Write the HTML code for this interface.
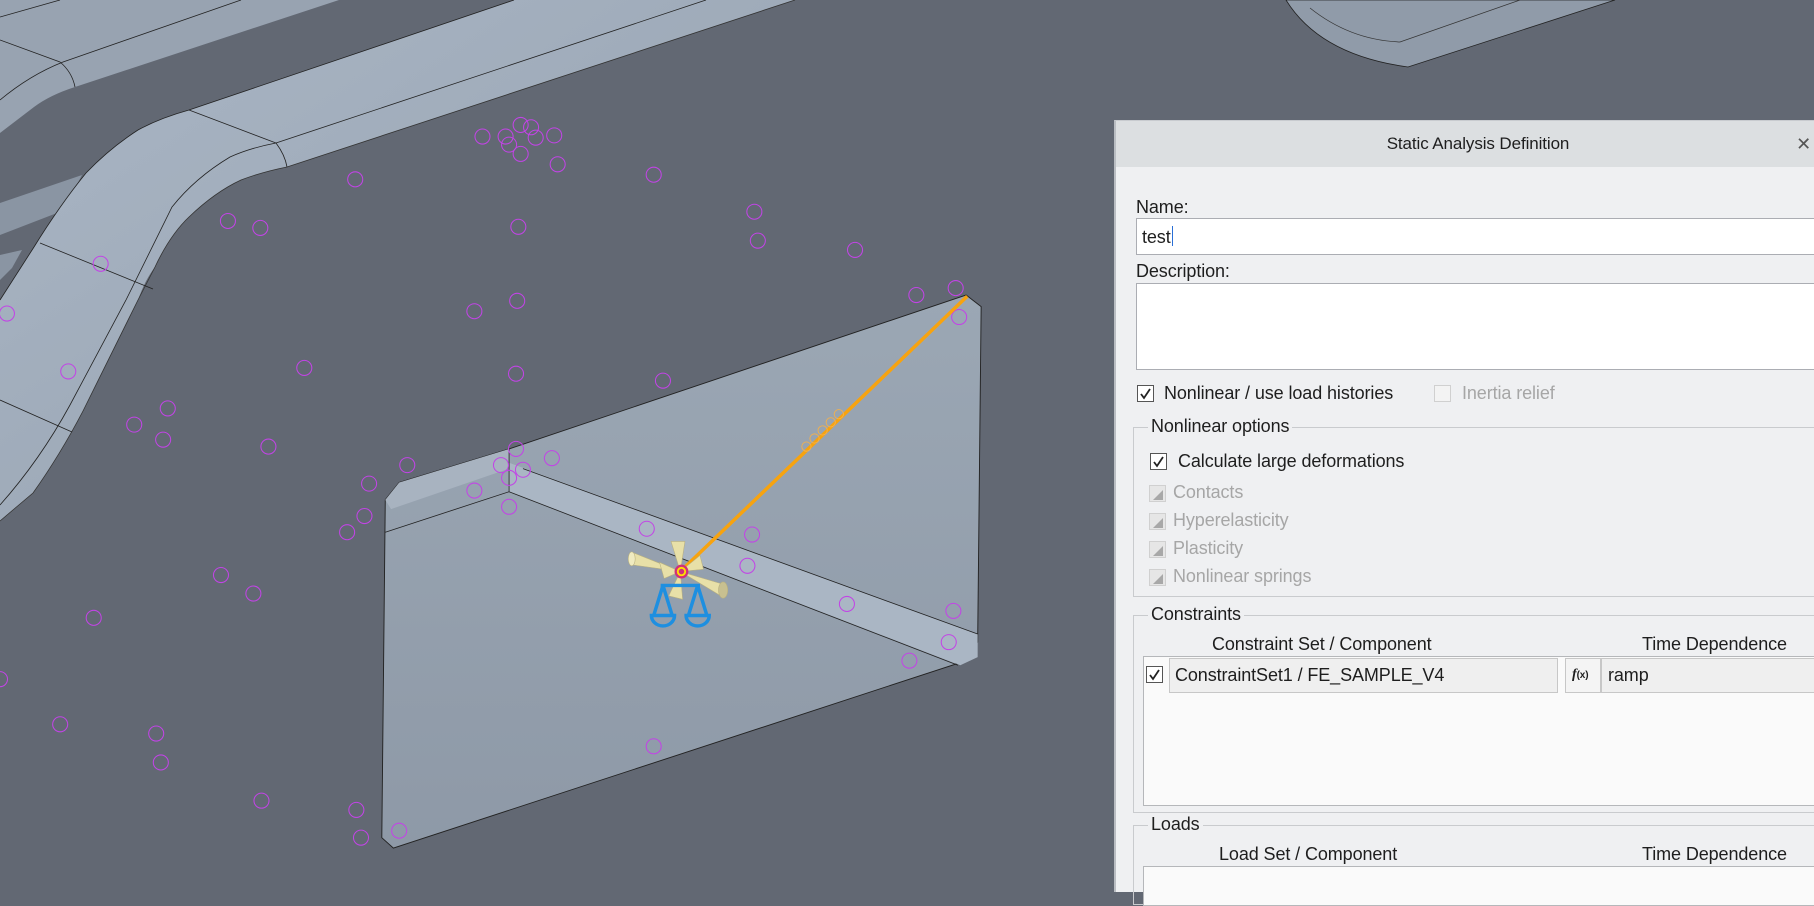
<!DOCTYPE html>
<html><head><meta charset="utf-8">
<style>
*{margin:0;padding:0;box-sizing:border-box}
html,body{width:1814px;height:892px;overflow:hidden;background:#626873;font-family:"Liberation Sans",sans-serif;}
#scene{position:absolute;left:0;top:0}
#dlg{position:absolute;left:1114px;top:120px;width:700px;height:772px;background:#eff0f2;border-left:2px solid #b9bdc2;border-top:1px solid #c8cbcf;color:#1e1e1e;font-size:18px;letter-spacing:-0.1px}
.title{position:absolute;left:0;top:0;width:700px;height:46px;background:#dcdfe1;text-align:center;line-height:46px;font-size:17px;padding-left:24px}
.close{position:absolute;right:0;top:0;line-height:46px;font-size:18px;color:#555}
.abs{position:absolute;white-space:nowrap}
.inp{position:absolute;background:#fff;border:1px solid #abadb3}
.cb{position:absolute;width:17px;height:17px;border:1px solid #555;background:#fff}
.cb svg{position:absolute;left:1px;top:1px}
.dcb{position:absolute;width:17px;height:17px;border:1px solid #d0d0d0;background:#e6e6e6}
.dis{color:#a6a6a6}
.grp{position:absolute;border:1px solid #c9cbce;border-right:none}
.lg{position:absolute;background:#eff0f2;padding:0 3px}
.tbl{position:absolute;background:#fafafa;border:1px solid #b5b7ba;border-right:none}
.cell{position:absolute;background:#efefef;border:1px solid #c7c7c7}
</style></head><body>
<svg id="scene" width="1814" height="892" viewBox="0 0 1814 892">
<defs>
<linearGradient id="gb" x1="0" y1="0" x2="1" y2="1"><stop offset="0" stop-color="#aab6c5"/><stop offset="1" stop-color="#94a0ae"/></linearGradient>
<linearGradient id="gp" x1="0" y1="0" x2="0" y2="1"><stop offset="0" stop-color="#9ba7b4"/><stop offset="1" stop-color="#8e99a7"/></linearGradient>
</defs>
<rect width="1814" height="892" fill="#626873"/>
<!-- top bar -->
<path d="M0,0 L339,0 L75,87 Q50,95 34,107 L0,133 Z" fill="#98a3b1"/>
<line x1="0" y1="17" x2="60" y2="0" stroke="#222" stroke-width="0.8"/>
<path d="M241,0 L63,62 Q30,75 0,100" fill="none" stroke="#222" stroke-width="0.8"/>
<path d="M0,40 L60,62 Q72,72 75,87" fill="none" stroke="#222" stroke-width="0.8"/>
<!-- secondary bar in gap -->
<polygon points="0,203 82,175 70,198 57,213 0,235" fill="#8a95a3"/>
<polygon points="0,255 22,250 12,268 0,280" fill="#8a95a3"/>
<!-- middle bent bar -->
<path d="M514,0 L189,110 Q160,118 138,130 Q110,148 86,173 Q60,205 34,247 L0,300 L0,521 Q20,505 33,493 Q60,455 83,411 L138,300 Q145,280 155,267 Q170,235 189,217 Q215,192 241,180 Q262,172 287,167 L795,0 Z" fill="url(#gb)"/>
<path d="M706,0 L276,143 Q250,148 230,157 Q195,178 172,207 L126,300 L70,405 Q40,460 0,505" fill="none" stroke="#222" stroke-width="0.8"/>
<path d="M514,0 L189,110 Q160,118 138,130 Q110,148 86,173 Q60,205 34,247 L0,300" fill="none" stroke="#222" stroke-width="0.8"/>
<path d="M795,0 L287,167 Q262,172 241,180 Q215,192 189,217 Q170,235 155,267 L138,300 L83,411 Q60,455 33,493 L0,521" fill="none" stroke="#333" stroke-width="0.8"/>
<line x1="189" y1="110" x2="276" y2="143" stroke="#222" stroke-width="0.8"/>
<path d="M276,143 Q285,155 287,167" fill="none" stroke="#222" stroke-width="0.8"/>
<line x1="40" y1="243" x2="153" y2="289" stroke="#222" stroke-width="0.8"/>
<line x1="0" y1="400" x2="72" y2="432" stroke="#222" stroke-width="0.8"/>
<!-- top-right part -->
<path d="M1286,0 Q1320,55 1408,67 L1615,0 Z" fill="#909ba9" stroke="#222" stroke-width="0.8"/>
<path d="M1310,8 Q1350,40 1400,42 L1520,0" fill="none" stroke="#333" stroke-width="0.7"/>
<g transform="scale(1.157)">
<!-- panel -->
<polygon points="345,417 440,388 835,255 848,265 845,555 832,572 340,733 330,724 333,432" fill="url(#gp)" stroke="#222" stroke-width="0.8"/>
<polygon points="345,417 440,388 440,405 338,440 333,432" fill="#a8b3c0"/>
<!-- tube -->
<polygon points="440,400 845,548 845,568 830,575 440,425" fill="#aab6c4"/>
<line x1="452" y1="405" x2="845" y2="548" stroke="#222" stroke-width="0.7"/>
<line x1="440" y1="425" x2="828" y2="575" stroke="#222" stroke-width="0.7"/>
<line x1="333" y1="460" x2="440" y2="425" stroke="#222" stroke-width="0.7"/>
<line x1="440" y1="388" x2="440" y2="425" stroke="#222" stroke-width="0.7"/>
<!-- circles -->
<g fill="none" stroke="#c244e6" stroke-width="0.9">
<circle cx="307" cy="155" r="6.5"/><circle cx="417" cy="118" r="6.5"/><circle cx="437" cy="118" r="6.5"/><circle cx="450" cy="108" r="6.5"/><circle cx="459" cy="110" r="6.5"/><circle cx="463" cy="119" r="6.5"/><circle cx="479" cy="117" r="6.5"/><circle cx="440" cy="125" r="6.5"/><circle cx="450" cy="133" r="6.5"/><circle cx="482" cy="142" r="6.5"/><circle cx="565" cy="151" r="6.5"/><circle cx="448" cy="196" r="6.5"/><circle cx="197" cy="191" r="6.5"/><circle cx="225" cy="197" r="6.5"/><circle cx="652" cy="183" r="6.5"/><circle cx="655" cy="208" r="6.5"/><circle cx="739" cy="216" r="6.5"/><circle cx="87" cy="228" r="6.5"/><circle cx="6" cy="271" r="6.5"/><circle cx="410" cy="269" r="6.5"/><circle cx="447" cy="260" r="6.5"/><circle cx="792" cy="255" r="6.5"/><circle cx="826" cy="249" r="6.5"/><circle cx="829" cy="274" r="6.5"/><circle cx="59" cy="321" r="6.5"/><circle cx="263" cy="318" r="6.5"/><circle cx="446" cy="323" r="6.5"/><circle cx="573" cy="329" r="6.5"/><circle cx="145" cy="353" r="6.5"/><circle cx="116" cy="367" r="6.5"/><circle cx="141" cy="380" r="6.5"/><circle cx="232" cy="386" r="6.5"/><circle cx="352" cy="402" r="6.5"/><circle cx="319" cy="418" r="6.5"/><circle cx="446" cy="388" r="6.5"/><circle cx="477" cy="396" r="6.5"/><circle cx="410" cy="424" r="6.5"/><circle cx="440" cy="438" r="6.5"/><circle cx="300" cy="460" r="6.5"/><circle cx="315" cy="446" r="6.5"/><circle cx="559" cy="457" r="6.5"/><circle cx="650" cy="462" r="6.5"/><circle cx="646" cy="489" r="6.5"/><circle cx="191" cy="497" r="6.5"/><circle cx="219" cy="513" r="6.5"/><circle cx="81" cy="534" r="6.5"/><circle cx="732" cy="522" r="6.5"/><circle cx="824" cy="528" r="6.5"/><circle cx="820" cy="555" r="6.5"/><circle cx="786" cy="571" r="6.5"/><circle cx="52" cy="626" r="6.5"/><circle cx="135" cy="634" r="6.5"/><circle cx="139" cy="659" r="6.5"/><circle cx="226" cy="692" r="6.5"/><circle cx="308" cy="700" r="6.5"/><circle cx="312" cy="724" r="6.5"/><circle cx="345" cy="718" r="6.5"/><circle cx="565" cy="645" r="6.5"/><circle cx="0" cy="587" r="6.5"/><circle cx="440" cy="413" r="6.5"/><circle cx="433" cy="402" r="6.5"/><circle cx="452" cy="406" r="6.5"/>
</g>
<!-- orange line + spring -->
<line x1="588" y1="494" x2="836" y2="256" stroke="#f7a30f" stroke-width="3"/>
<g fill="none" stroke="#f0b050" stroke-width="0.8"><circle cx="697" cy="386" r="4"/><circle cx="704" cy="379" r="4"/><circle cx="711" cy="372" r="4"/><circle cx="718" cy="365" r="4"/><circle cx="725" cy="358" r="4"/></g>
<!-- constraint cones -->
<g fill="#e8e0a8" stroke="#b8b080" stroke-width="0.5">
<polygon points="588,494 548,478 545,488"/><ellipse cx="546" cy="483" rx="3" ry="6" fill="#f0ebc0"/>
<polygon points="588,494 580,468 592,468"/>
<polygon points="588,494 625,505 623,515"/><ellipse cx="625" cy="510" rx="4" ry="7" fill="#c8c090"/>
<polygon points="588,494 578,515 590,518"/>
<polygon points="588,494 570,486 574,500"/>
<polygon points="588,494 605,480 608,492"/>
</g>
<circle cx="589" cy="494" r="6" fill="#d0307a"/><circle cx="589" cy="494" r="3.2" fill="none" stroke="#ffe000" stroke-width="1.6"/>
<!-- scales icon -->
<g fill="none" stroke="#1e8fe0" stroke-width="3">
<line x1="571" y1="506" x2="605" y2="506"/>
<path d="M573,506 L565,532 M573,506 L581,532 M603,506 L595,532 M603,506 L611,532"/>
<path d="M563,532 L583,532 A10,9 0 0 1 563,532 Z M593,532 L613,532 A10,9 0 0 1 593,532 Z"/>
</g>
</g>
</svg>

<div id="dlg">
<div class="title">Static Analysis Definition<span class="close">✕&nbsp;</span></div>
<div class="abs" style="left:20px;top:76px">Name:</div>
<div class="inp" style="left:20px;top:97px;width:690px;height:37px"><span class="abs" style="left:5px;top:8px">test</span><span class="abs" style="left:35px;top:7px;width:1px;height:20px;background:#2a6fd6"></span></div>
<div class="abs" style="left:20px;top:140px">Description:</div>
<div class="inp" style="left:20px;top:162px;width:690px;height:87px"></div>
<div class="cb" style="left:21px;top:264px"><svg width="13" height="13"><path d="M2,7 L5,11 L11,2" fill="none" stroke="#222" stroke-width="1.8"/></svg></div>
<div class="abs" style="left:48px;top:262px">Nonlinear / use load histories</div>
<div class="dcb" style="left:318px;top:264px;background:#f3f3f3"></div>
<div class="abs dis" style="left:346px;top:262px">Inertia relief</div>

<div class="grp" style="left:17px;top:306px;width:690px;height:170px"></div>
<div class="lg" style="left:32px;top:295px">Nonlinear options</div>
<div class="cb" style="left:34px;top:332px"><svg width="13" height="13"><path d="M2,7 L5,11 L11,2" fill="none" stroke="#222" stroke-width="1.8"/></svg></div>
<div class="abs" style="left:62px;top:330px">Calculate large deformations</div>
<div class="dcb" style="left:33px;top:364px"><svg width="15" height="15"><polygon points="3,13 13,13 13,3" fill="#a8a8a8"/></svg></div>
<div class="abs dis" style="left:57px;top:361px">Contacts</div>
<div class="dcb" style="left:33px;top:392px"><svg width="15" height="15"><polygon points="3,13 13,13 13,3" fill="#a8a8a8"/></svg></div>
<div class="abs dis" style="left:57px;top:389px">Hyperelasticity</div>
<div class="dcb" style="left:33px;top:420px"><svg width="15" height="15"><polygon points="3,13 13,13 13,3" fill="#a8a8a8"/></svg></div>
<div class="abs dis" style="left:57px;top:417px">Plasticity</div>
<div class="dcb" style="left:33px;top:448px"><svg width="15" height="15"><polygon points="3,13 13,13 13,3" fill="#a8a8a8"/></svg></div>
<div class="abs dis" style="left:57px;top:445px">Nonlinear springs</div>

<div class="grp" style="left:17px;top:494px;width:690px;height:198px"></div>
<div class="lg" style="left:32px;top:483px">Constraints</div>
<div class="abs" style="left:96px;top:513px">Constraint Set / Component</div>
<div class="abs" style="left:526px;top:513px">Time Dependence</div>
<div class="tbl" style="left:27px;top:535px;width:673px;height:150px">
<div class="cb" style="left:2px;top:9px"><svg width="13" height="13"><path d="M2,7 L5,11 L11,2" fill="none" stroke="#222" stroke-width="1.8"/></svg></div>
<div class="cell" style="left:25px;top:1px;width:389px;height:35px"><span class="abs" style="left:5px;top:6px">ConstraintSet1 / FE_SAMPLE_V4</span></div>
<div class="cell" style="left:421px;top:1px;width:36px;height:35px;background:#f4f4f4"><span class="abs" style="left:6px;top:8px;font-size:14px;font-family:'Liberation Serif',serif;font-style:italic;font-weight:bold">f<span style="font-size:10px;font-style:normal;font-family:'Liberation Sans',sans-serif">(x)</span></span></div>
<div class="cell" style="left:457px;top:1px;width:220px;height:35px"><span class="abs" style="left:6px;top:6px">ramp</span></div>
</div>

<div class="grp" style="left:17px;top:704px;width:690px;height:80px"></div>
<div class="lg" style="left:32px;top:693px">Loads</div>
<div class="abs" style="left:103px;top:723px">Load Set / Component</div>
<div class="abs" style="left:526px;top:723px">Time Dependence</div>
<div class="tbl" style="left:27px;top:745px;width:673px;height:40px"></div>
</div>
</body></html>
